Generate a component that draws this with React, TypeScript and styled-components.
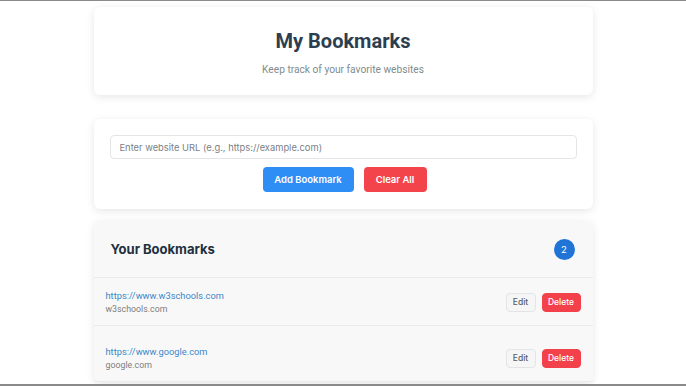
import React from "react";
import styled, { createGlobalStyle } from "styled-components";

const Global = createGlobalStyle`
  html, body { margin: 0; padding: 0; background: #ffffff; }
  * { box-sizing: border-box; }
`;

const Frame = styled.div`
  height: 386px;
  overflow: hidden;
  border-top: 1px solid #8a8a8a;
  border-bottom: 2px solid #8a8a8a;
  background: #ffffff;
`;

const Container = styled.div`
  width: 499px;
  margin: 0 auto;
  padding-top: 6px;
  display: flex;
  flex-direction: column;
`;

const Card = styled.div<{ $gap?: number; $bg?: string }>`
  background: ${(p) => p.$bg || "#ffffff"};
  border-radius: 6px;
  box-shadow: 0 2px 8px rgba(0, 0, 0, 0.1);
  margin-bottom: ${(p) => p.$gap ?? 0}px;
`;

const Header = styled(Card)`
  height: 88px;
  display: flex;
  flex-direction: column;
  align-items: center;
  padding-top: 20px;
`;

const Title = styled.h1`
  margin: 0;
  font-family: Roboto, "Liberation Sans", sans-serif;
  font-weight: 700;
  font-size: 20px;
  line-height: 28px;
  color: #2c3e50;
`;

const Subtitle = styled.p`
  margin: 8px 0 0;
  font-family: Roboto, "Liberation Sans", sans-serif;
  font-size: 10.2px;
  line-height: 14px;
  color: #7f8c8d;
`;

const Form = styled(Card)`
  padding: 16px 16px 17px;
  display: flex;
  flex-direction: column;
  gap: 8px;
`;

const Input = styled.input`
  width: 100%;
  height: 24px;
  border: 1px solid #e3e5e8;
  border-radius: 4px;
  padding: 0 9px;
  font-family: Inter, "Liberation Sans", sans-serif;
  font-size: 9.35px;
  color: #333;
  outline: none;
  &::placeholder { color: #7b7f85; }
`;

const ButtonRow = styled.div`
  display: flex;
  justify-content: center;
  gap: 10px;
  padding-left: 3px;
`;

const Button = styled.button<{ $color: string; $w: number }>`
  width: ${(p) => p.$w}px;
  height: 25px;
  border: none;
  border-radius: 4px;
  background: ${(p) => p.$color};
  color: #ffffff;
  font-family: Inter, "Liberation Sans", sans-serif;
  font-weight: 600;
  font-size: 9.5px;
  padding: 0;
  cursor: pointer;
`;

const ListCard = styled(Card)`
  background: #f8f8f9;
  display: flex;
  flex-direction: column;
`;

const ListHeader = styled.div`
  height: 57px;
  display: flex;
  align-items: center;
  justify-content: space-between;
  padding: 0 18px 0 17px;
  border-bottom: 1px solid #eaebec;
`;

const ListTitle = styled.h2`
  margin: 0;
  font-family: Inter, "Liberation Sans", sans-serif;
  font-weight: 700;
  font-size: 13px;
  color: #22303e;
`;

const Badge = styled.span`
  width: 21px;
  height: 21px;
  border-radius: 50%;
  background: #1f74d6;
  color: #ffffff;
  display: flex;
  align-items: center;
  justify-content: center;
  font-family: Inter, "Liberation Sans", sans-serif;
  font-size: 9.5px;
`;

const Item = styled.div<{ $first?: boolean }>`
  display: flex;
  align-items: center;
  justify-content: space-between;
  margin-top: ${(p) => (p.$first ? 0 : 8)}px;
  padding: 11px 12px 10px 12px;
  border-bottom: 1px solid #eaebec;
`;

const Info = styled.div`
  display: flex;
  flex-direction: column;
  gap: 1px;
`;

const Link = styled.a`
  font-family: Roboto, "Liberation Sans", sans-serif;
  font-size: 9.3px;
  line-height: 13px;
  color: #3a88c8;
  text-decoration: none;
`;

const Domain = styled.span`
  font-family: Roboto, "Liberation Sans", sans-serif;
  font-size: 8.8px;
  line-height: 12px;
  color: #7d7d7d;
`;

const Actions = styled.div`
  display: flex;
  gap: 6px;
`;

const SmallButton = styled.button<{ $danger?: boolean }>`
  height: 19px;
  width: ${(p) => (p.$danger ? 39 : 30)}px;
  border-radius: 4px;
  border: 1px solid ${(p) => (p.$danger ? "#f2414a" : "#e3e4e6")};
  background: ${(p) => (p.$danger ? "#f2414a" : "#f6f6f7")};
  color: ${(p) => (p.$danger ? "#ffffff" : "#5a5e63")};
  font-family: Inter, "Liberation Sans", sans-serif;
  font-size: 8.5px;
  font-weight: 500;
  padding: 0;
`;

const bookmarks = [
  { url: "https://www.w3schools.com", domain: "w3schools.com" },
  { url: "https://www.google.com", domain: "google.com" },
];

export default function App() {
  return (
    <>
      <Global />
      <Frame>
        <Container>
          <Header $gap={24}>
            <Title>My Bookmarks</Title>
            <Subtitle>Keep track of your favorite websites</Subtitle>
          </Header>
          <Form $gap={12}>
            <Input placeholder="Enter website URL (e.g., https://example.com)" />
            <ButtonRow>
              <Button $color="#2e8ef5" $w={91}>Add Bookmark</Button>
              <Button $color="#f4444b" $w={63}>Clear All</Button>
            </ButtonRow>
          </Form>
          <ListCard>
            <ListHeader>
              <ListTitle>Your Bookmarks</ListTitle>
              <Badge>{bookmarks.length}</Badge>
            </ListHeader>
            {bookmarks.map((b, i) => (
              <Item key={b.url} $first={i === 0}>
                <Info>
                  <Link href={b.url}>{b.url}</Link>
                  <Domain>{b.domain}</Domain>
                </Info>
                <Actions>
                  <SmallButton>Edit</SmallButton>
                  <SmallButton $danger>Delete</SmallButton>
                </Actions>
              </Item>
            ))}
          </ListCard>
        </Container>
      </Frame>
    </>
  );
}
